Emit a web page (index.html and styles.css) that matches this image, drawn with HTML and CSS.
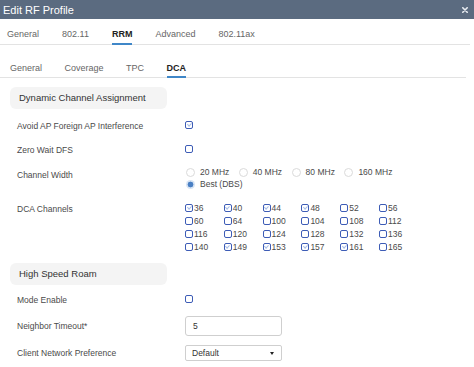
FILE: index.html
```html
<!DOCTYPE html>
<html lang="en">
<head>
    <meta charset="UTF-8">
    <meta name="viewport" content="width=device-width, initial-scale=1.0">
    <title>Edit RF Profile</title>
    <link rel="stylesheet" href="styles.css">
</head>
<body>
    <header class="modal-head">
        <span class="modal-title">Edit RF Profile</span>
        <span class="close">
            <svg width="6" height="6" viewBox="0 0 6 6"><path d="M0.8 0.8 L5.2 5.2 M5.2 0.8 L0.8 5.2" stroke="#e9edf2" stroke-width="1.6" stroke-linecap="round"/></svg>
        </span>
    </header>

    <nav class="tabs tabs-main">
        <span class="tab">General</span>
        <span class="tab">802.11</span>
        <span class="tab active">RRM</span>
        <span class="tab">Advanced</span>
        <span class="tab">802.11ax</span>
    </nav>
    <nav class="tabs tabs-sub">
        <span class="tab">General</span>
        <span class="tab">Coverage</span>
        <span class="tab">TPC</span>
        <span class="tab active">DCA</span>
    </nav>

    <section class="group">
        <h2 class="group-title">Dynamic Channel Assignment</h2>
        <div class="fields">
            <div class="row row-check">
                <label>Avoid AP Foreign AP Interference</label>
                <span class="cb on"></span>
            </div>
            <div class="row row-check">
                <label>Zero Wait DFS</label>
                <span class="cb"></span>
            </div>
            <div class="row row-width">
                <label>Channel Width</label>
                <div class="radios">
                    <div class="radio-line">
                        <span class="radio-opt"><span class="radio"></span>20 MHz</span>
                        <span class="radio-opt"><span class="radio"></span>40 MHz</span>
                        <span class="radio-opt"><span class="radio"></span>80 MHz</span>
                        <span class="radio-opt"><span class="radio"></span>160 MHz</span>
                    </div>
                    <div class="radio-line">
                        <span class="radio-opt"><span class="radio on"></span>Best (DBS)</span>
                    </div>
                </div>
            </div>
            <div class="row row-dca">
                <label>DCA Channels</label>
                <div class="channels">
                    <span class="ch"><span class="cb on"></span>36</span>
                    <span class="ch"><span class="cb on"></span>40</span>
                    <span class="ch"><span class="cb on"></span>44</span>
                    <span class="ch"><span class="cb on"></span>48</span>
                    <span class="ch"><span class="cb"></span>52</span>
                    <span class="ch"><span class="cb"></span>56</span>
                    <span class="ch"><span class="cb"></span>60</span>
                    <span class="ch"><span class="cb"></span>64</span>
                    <span class="ch"><span class="cb"></span>100</span>
                    <span class="ch"><span class="cb"></span>104</span>
                    <span class="ch"><span class="cb"></span>108</span>
                    <span class="ch"><span class="cb"></span>112</span>
                    <span class="ch"><span class="cb"></span>116</span>
                    <span class="ch"><span class="cb"></span>120</span>
                    <span class="ch"><span class="cb"></span>124</span>
                    <span class="ch"><span class="cb"></span>128</span>
                    <span class="ch"><span class="cb"></span>132</span>
                    <span class="ch"><span class="cb"></span>136</span>
                    <span class="ch"><span class="cb"></span>140</span>
                    <span class="ch"><span class="cb on"></span>149</span>
                    <span class="ch"><span class="cb on"></span>153</span>
                    <span class="ch"><span class="cb on"></span>157</span>
                    <span class="ch"><span class="cb on"></span>161</span>
                    <span class="ch"><span class="cb"></span>165</span>
                </div>
            </div>
        </div>
    </section>

    <section class="group group-roam">
        <h2 class="group-title">High Speed Roam</h2>
        <div class="fields fields-roam">
            <div class="row row-check">
                <label>Mode Enable</label>
                <span class="cb"></span>
            </div>
            <div class="row row-input">
                <label>Neighbor Timeout*</label>
                <span class="text-input">5</span>
            </div>
            <div class="row row-select">
                <label>Client Network Preference</label>
                <span class="select-box">Default<span class="caret"></span></span>
            </div>
        </div>
    </section>
</body>
</html>
```

FILE: styles.css
```css
body {
    margin: 0;
    background: #fff;
    color: #4a4a4a;
    font-family: "Liberation Sans", Arial, sans-serif;
}
.modal-head {
    height: 19px;
    background: #5b6b80;
    display: flex;
    align-items: center;
    justify-content: space-between;
    padding: 0 6px 0 3px;
}
.modal-title {
    color: #fff;
    font-size: 11px;
}
.close {
    display: flex;
}

/* tab bars */
.tabs {
    display: flex;
    border-bottom: 1px solid #e3e3e3;
    font-size: 9px;
    line-height: 11px;
}
.tabs-main {
    gap: 23px;
    padding-left: 7px;
    margin-right: 4px;
}
.tabs-sub {
    gap: 22.5px;
    padding-left: 10px;
    margin-right: 8px;
}
.tab {
    color: #666;
    border-bottom: 2px solid transparent;
    margin-bottom: -1px;
}
.tabs-main .tab {
    padding: 10px 0 3px;
}
.tabs-sub .tab {
    padding: 18px 0 2px;
}
.tab.active {
    color: #222;
    font-weight: bold;
    border-bottom-color: #3f87c8;
}

/* sections */
.group-title {
    margin: 9px 0 0 10px;
    width: 157px;
    height: 22px;
    box-sizing: border-box;
    padding-left: 9px;
    background: #f4f4f4;
    border-radius: 6px;
    font-size: 9.5px;
    font-weight: normal;
    line-height: 22px;
    color: #333;
}
.group-roam .group-title {
    margin-top: 10px;
}
.fields {
    padding-top: 5px;
}
.fields-roam {
    padding-top: 3px;
}
.row {
    display: grid;
    grid-template-columns: 168px auto;
    padding-left: 17px;
    align-items: center;
    font-size: 8.5px;
}
.row label {
    line-height: 12px;
}
.row-check {
    height: 24px;
}
.row-width {
    align-items: start;
}
.row-width label {
    padding-top: 7px;
}
.row-dca {
    align-items: start;
    padding-top: 11px;
}
.row-dca label {
    margin-top: 2px;
}
.row-input {
    height: 28px;
}
.row-select {
    height: 26px;
}

/* checkbox */
.cb {
    display: block;
    position: relative;
    width: 8px;
    height: 8px;
    box-sizing: border-box;
    border: 1.5px solid #3d5cb6;
    border-radius: 2px;
    background: #fff;
    justify-self: start;
}
.row-check .cb {
    margin-bottom: 3px;
}
.cb.on::after {
    content: "";
    position: absolute;
    left: 1.5px;
    top: 0.3px;
    width: 1.5px;
    height: 3px;
    border: solid #a7bce6;
    border-width: 0 0.8px 0.8px 0;
    transform: rotate(45deg);
}

/* radios */
.radios {
    padding-top: 4px;
    padding-left: 1px;
}
.radio-line {
    display: flex;
    height: 12px;
    align-items: center;
}
.radio-opt {
    display: flex;
    align-items: center;
    gap: 5px;
    margin-right: 9.5px;
}
.radio {
    width: 9px;
    height: 9px;
    box-sizing: border-box;
    border: 1px solid #dadada;
    border-radius: 50%;
}
.radio.on {
    border: none;
    background: radial-gradient(circle, #4a80c4 0 2.6px, #d7e4f4 3.2px);
}

/* channel grid */
.channels {
    display: grid;
    grid-template-columns: repeat(6, 38.8px);
    grid-auto-rows: 13px;
    align-items: center;
}
.ch {
    display: flex;
    align-items: center;
    gap: 1px;
}

/* inputs */
.text-input,
.select-box {
    width: 97px;
    box-sizing: border-box;
    display: flex;
    align-items: center;
    border: 1px solid #cfcfcf;
    color: #333;
}
.text-input {
    height: 20px;
    border-radius: 3px;
    padding-left: 7px;
}
.select-box {
    height: 16px;
    border-radius: 2px;
    padding: 0 7px 0 6px;
    justify-content: space-between;
}
.caret {
    width: 0;
    height: 0;
    border-left: 2.5px solid transparent;
    border-right: 2.5px solid transparent;
    border-top: 3.5px solid #222;
}
```
